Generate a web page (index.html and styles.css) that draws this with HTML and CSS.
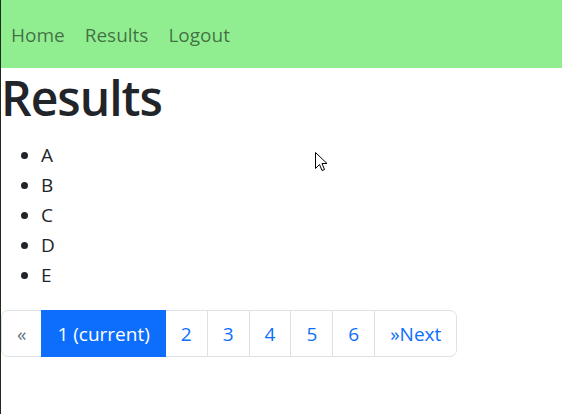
FILE: index.html
```html
<!DOCTYPE html>
<html lang="en">
<head>
<meta charset="utf-8">
<title>Results</title>
<link rel="stylesheet" href="styles.css">
</head>
<body>
<nav class="navbar">
  <a class="nav-link" href="#">Home</a>
  <a class="nav-link" href="#">Results</a>
  <a class="nav-link" href="#">Logout</a>
</nav>
<main class="content">
  <h1 class="title">Results</h1>
  <ul class="items">
    <li>A</li>
    <li>B</li>
    <li>C</li>
    <li>D</li>
    <li>E</li>
  </ul>
  <ul class="pagination">
    <li class="page-item disabled"><span class="page-link">«</span></li>
    <li class="page-item active"><span class="page-link">1 (current)</span></li>
    <li class="page-item"><a class="page-link" href="#">2</a></li>
    <li class="page-item"><a class="page-link" href="#">3</a></li>
    <li class="page-item"><a class="page-link" href="#">4</a></li>
    <li class="page-item"><a class="page-link" href="#">5</a></li>
    <li class="page-item"><a class="page-link" href="#">6</a></li>
    <li class="page-item"><a class="page-link" href="#">»Next</a></li>
  </ul>
</main>
<svg class="cursor" width="13" height="21" viewBox="0 0 13 21" aria-hidden="true">
  <path d="M0.5 0.5 L0.5 16.5 L4.5 12.5 L7 18.5 L9.5 17.5 L7 11.5 L12 11.5 Z" fill="#fff" stroke="#000" stroke-width="1" stroke-linejoin="miter"/>
</svg>
</body>
</html>
```
FILE: styles.css
```css
html, body {
  margin: 0;
  padding: 0;
  background: #fff;
}
body {
  border-left: 1px solid #1d2b1d;
  min-height: 414px;
  box-sizing: border-box;
  font-family: "Open Sans", "Noto Sans", sans-serif;
  font-size: 19px;
  line-height: 30px;
  color: #212529;
  position: relative;
}
.navbar {
  display: flex;
  align-items: center;
  height: 68px;
  padding-top: 2px;
  box-sizing: border-box;
  background: #90ee90;
}
.nav-link {
  padding: 10px;
  color: rgba(0, 0, 0, 0.55);
  text-decoration: none;
}
.title {
  margin: 0 0 12px;
  font-size: 48px;
  font-weight: 600;
  letter-spacing: -1px;
  line-height: 60px;
}
.items {
  margin: 0 0 20px;
  padding-left: 40px;
}
.pagination {
  display: flex;
  list-style: none;
  margin: 0;
  padding: 0;
}
.page-link {
  display: block;
  padding: 7.5px 15px;
  border: 1px solid #dee2e6;
  margin-left: -1px;
  color: #0d6efd;
  text-decoration: none;
  background: #fff;
}
.page-item:first-child .page-link {
  margin-left: 0;
  border-radius: 7px 0 0 7px;
}
.page-item:last-child .page-link {
  border-radius: 0 7px 7px 0;
}
.page-item.disabled .page-link {
  color: #6c757d;
}
.page-item.active .page-link {
  position: relative;
  background: #0d6efd;
  border-color: #0d6efd;
  color: #fff;
}
.cursor {
  position: absolute;
  left: 314px;
  top: 152px;
}
```
